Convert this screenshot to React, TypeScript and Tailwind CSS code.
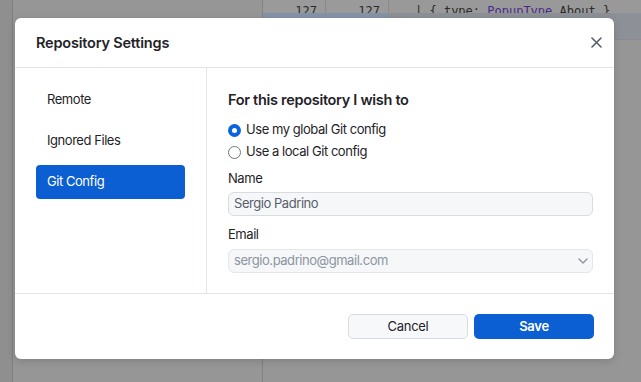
import React from "react";

export default function App() {
  const font = { fontFamily: "Inter, 'Noto Sans', sans-serif" };
  return (
    <div className="relative flex h-[382px] w-[641px] overflow-hidden bg-[#969696]" style={font}>
      {/* background app (dimmed) */}
      <div className="h-full w-[13px] border-r border-[#7f7f7f] bg-[#8f8f8f]" />
      <div className="h-full w-[250px] border-r border-[#828282]" />
      <div className="flex h-full flex-1 flex-col">
        <div className="flex h-[13px] text-[12px] leading-[12px] text-[#2a2a2a]" style={{ fontFamily: "'DejaVu Sans Mono', monospace" }}>
          <div className="flex w-[63px] items-end justify-end border-r border-[#8a8a8a] bg-[#9a9a9a] pr-[8px]">
            <span className="-mb-[4px]">127</span>
          </div>
          <div className="flex w-[63px] items-end justify-end border-r border-[#8a8a8a] bg-[#9a9a9a] pr-[8px]">
            <span className="-mb-[4px]">127</span>
          </div>
          <div className="flex flex-1 items-end bg-[#999999] pl-[26px]">
            <span className="-mb-[4px] whitespace-pre">| {"{"} type: <span className="text-[#4a2a8a]">PopupType</span>.About {"}"}</span>
          </div>
        </div>
        <div className="flex h-[27px] border-b border-[#858b93]">
          <div className="w-[126px] bg-[#8593a8]" />
          <div className="flex-1 bg-[#8d9197]" />
        </div>
      </div>

      {/* modal */}
      <div className="absolute left-[15px] top-[18px] flex h-[341px] w-[599px] flex-col rounded-[6px] bg-white shadow-[0_2px_8px_rgba(0,0,0,0.15)]">
        <div className="flex h-[50px] items-center justify-between border-b border-[#e1e4e8] pl-[21px] pr-[12px]">
          <span className="text-[14.5px] font-semibold tracking-[-0.2px] text-[#1f2328]">Repository Settings</span>
          <svg width="11" height="11" viewBox="0 0 11 11">
            <path d="M1 1 L10 10 M10 1 L1 10" stroke="#57606a" strokeWidth="1.6" strokeLinecap="round" />
          </svg>
        </div>
        <div className="flex h-[226px] border-b border-[#e1e4e8]">
          <div className="flex w-[192px] flex-col gap-[7px] border-r border-[#e1e4e8] px-[21px] pt-[15px] text-[13px] tracking-[-0.45px] text-[#1f2328]">
            <div className="flex h-[34px] items-center px-[11px]">Remote</div>
            <div className="flex h-[34px] items-center px-[11px]">Ignored Files</div>
            <div className="flex h-[34px] items-center rounded-[4px] bg-[#0b5fd2] px-[11px] text-white">Git Config</div>
          </div>
          <div className="flex flex-1 flex-col px-[21px] pt-[23px] text-[13px] tracking-[-0.45px] text-[#1f2328]">
            <div className="text-[14.5px] font-semibold leading-[18px] tracking-[-0.3px]">For this repository I wish to</div>
            <div className="mt-[11px] flex h-[20px] items-center gap-[5px]">
              <span className="flex h-[13px] w-[13px] items-center justify-center rounded-full bg-[#0a64e0]">
                <span className="h-[5px] w-[5px] rounded-full bg-white" />
              </span>
              <span>Use my global Git config</span>
            </div>
            <div className="mt-[2px] flex h-[20px] items-center gap-[5px]">
              <span className="h-[13px] w-[13px] rounded-full border border-[#6e7781] bg-white" />
              <span>Use a local Git config</span>
            </div>
            <div className="mt-[7px] leading-[18px]">Name</div>
            <div className="mt-[5px] flex h-[24px] items-center rounded-[6px] border border-[#d8dce1] bg-[#f6f7f9] px-[5px] text-[#57606a]">
              Sergio Padrino
            </div>
            <div className="mt-[9px] leading-[18px]">Email</div>
            <div className="mt-[6px] flex h-[24px] items-center justify-between rounded-[6px] border border-[#e3e6ea] bg-[#f6f7f9] pl-[5px] pr-[4px] text-[#8c959f]">
              <span>sergio.padrino@gmail.com</span>
              <svg width="10" height="6" viewBox="0 0 10 6">
                <path d="M1 1 L5 5 L9 1" stroke="#8c959f" strokeWidth="1.4" fill="none" strokeLinecap="round" strokeLinejoin="round" />
              </svg>
            </div>
          </div>
        </div>
        <div className="flex flex-1 items-center justify-end gap-[6px] pr-[20px] text-[13px] tracking-[-0.3px]">
          <button className="h-[25px] w-[120px] rounded-[5px] border border-[#d8dce1] bg-[#f6f8fa] text-[#1f2328]">Cancel</button>
          <button className="h-[25px] w-[120px] rounded-[5px] bg-[#0b5fd2] font-semibold text-white">Save</button>
        </div>
      </div>
    </div>
  );
}
